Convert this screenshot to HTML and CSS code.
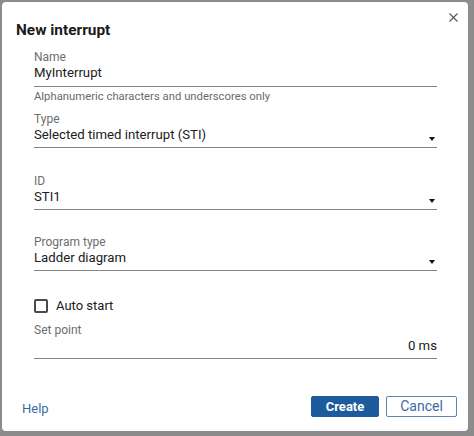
FILE: index.html
```html
<!DOCTYPE html>
<html lang="en">
<head>
<meta charset="utf-8">
<title>New interrupt</title>
<link rel="stylesheet" href="styles.css">
</head>
<body>
<div class="dialog">
  <div class="header">
    <h1 class="title">New interrupt</h1>
    <button class="close" aria-label="Close">
      <svg width="9" height="9" viewBox="0 0 9 9"><path d="M0.5 0.5 L8.5 8.5 M8.5 0.5 L0.5 8.5" stroke="#555" stroke-width="1.1" fill="none"/></svg>
    </button>
  </div>
  <div class="form">
    <div class="field">
      <div class="label">Name</div>
      <div class="value">MyInterrupt</div>
    </div>
    <div class="hint">Alphanumeric characters and underscores only</div>
    <div class="field select first">
      <div class="label">Type</div>
      <div class="value"><span>Selected timed interrupt (STI)</span><i class="caret"></i></div>
    </div>
    <div class="field select">
      <div class="label">ID</div>
      <div class="value"><span>STI1</span><i class="caret"></i></div>
    </div>
    <div class="field select">
      <div class="label">Program type</div>
      <div class="value"><span>Ladder diagram</span><i class="caret"></i></div>
    </div>
    <label class="check">
      <span class="box"></span>
      <span class="check-text">Auto start</span>
    </label>
    <div class="field setpoint">
      <div class="label">Set point</div>
      <div class="value right">0 ms</div>
    </div>
  </div>
  <div class="footer">
    <a class="help" href="#">Help</a>
    <div class="buttons">
      <button class="btn primary">Create</button>
      <button class="btn secondary">Cancel</button>
    </div>
  </div>
</div>
</body>
</html>
```
FILE: styles.css
```css
html, body {
  margin: 0;
  padding: 0;
}
body {
  width: 474px;
  height: 436px;
  background: #8c8c8c;
  font-family: Roboto, "Noto Sans", Arial, sans-serif;
  overflow: hidden;
}
.dialog {
  box-sizing: border-box;
  margin: 2px 0 0 2px;
  width: 466px;
  height: 429px;
  background: #ffffff;
  border-radius: 4px;
  display: flex;
  flex-direction: column;
}
.header {
  display: flex;
  justify-content: space-between;
  align-items: flex-start;
  padding: 0 10px 0 14px;
}
.title {
  margin: 18.5px 0 0 0;
  font-size: 15.4px;
  line-height: 18px;
  font-weight: 700;
  color: #1b1b1b;
}
.close {
  margin-top: 11px;
  padding: 0;
  border: 0;
  background: none;
  width: 9px;
  height: 9px;
  display: flex;
}
.form {
  padding: 12.5px 31px 0 32px;
  display: flex;
  flex-direction: column;
}
.field {
  border-bottom: 1px solid #858585;
  padding-bottom: 4px;
}
.field.select {
  padding-bottom: 3px;
  margin-top: 26.5px;
}
.field.select.first {
  margin-top: 10px;
}
.label {
  font-size: 12px;
  line-height: 13px;
  color: #6e6e6e;
}
.value {
  font-size: 13.2px;
  line-height: 18px;
  color: #202020;
  display: flex;
  justify-content: space-between;
  align-items: flex-end;
}
.value.right {
  justify-content: flex-end;
}
.caret {
  width: 0;
  height: 0;
  border-left: 3.5px solid transparent;
  border-right: 3.5px solid transparent;
  border-top: 4px solid #111;
  margin: 0 2px 3px 0;
}
.hint {
  margin-top: 3px;
  font-size: 11.3px;
  line-height: 13px;
  color: #6a6a6a;
}
.check {
  margin-top: 27.5px;
  display: flex;
  align-items: center;
  height: 14px;
}
.box {
  box-sizing: border-box;
  width: 14px;
  height: 14px;
  border: 2px solid #4a4a4a;
  border-radius: 2px;
}
.check-text {
  margin-left: 8px;
  font-size: 13px;
  line-height: 14px;
  color: #202020;
}
.field.setpoint {
  margin-top: 11px;
  padding-bottom: 3px;
}
.footer {
  margin-top: 37px;
  display: flex;
  justify-content: space-between;
  align-items: flex-start;
  padding: 0 11px 0 20px;
}
.help {
  margin-top: 5.5px;
  font-size: 13px;
  line-height: 16px;
  color: #3b6ca8;
  text-decoration: none;
}
.buttons {
  display: flex;
  gap: 7px;
}
.btn {
  box-sizing: border-box;
  height: 21px;
  padding: 0;
  border-radius: 2px;
  font-family: Roboto, Arial, sans-serif;
  line-height: 19px;
}
.primary {
  width: 68px;
  background: #1e5a9e;
  border: 1px solid #1e5a9e;
  color: #ffffff;
  font-size: 13px;
  font-weight: 700;
}
.secondary {
  width: 71px;
  background: #ffffff;
  border: 1px solid #6283b6;
  color: #3d6aa6;
  font-size: 14px;
  font-weight: 400;
}
```
